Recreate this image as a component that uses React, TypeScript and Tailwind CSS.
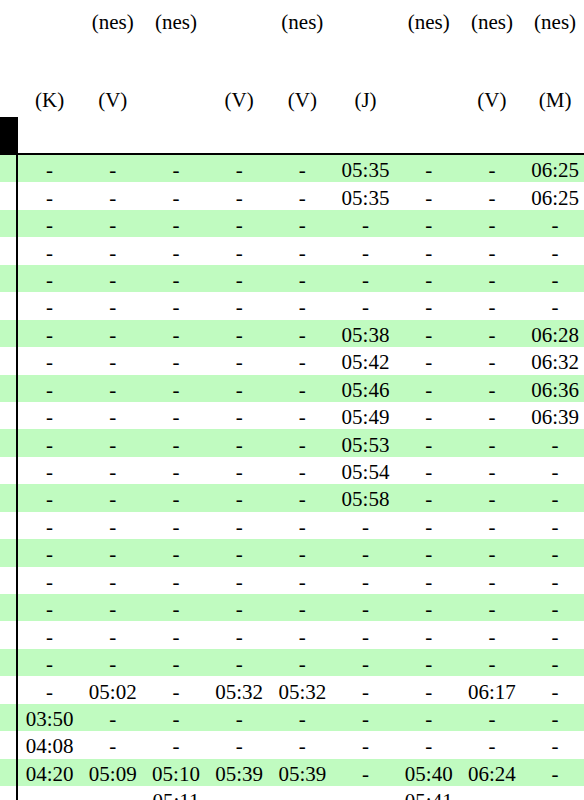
import React from "react";

const D = "-";
const blank = (): string[] => Array(9).fill(D);

function row(vals: Record<number, string>, base: string[] = blank()): string[] {
  const r = [...base];
  Object.entries(vals).forEach(([k, v]) => {
    r[Number(k)] = v;
  });
  return r;
}

const rows: string[][] = [
  row({ 5: "05:35", 8: "06:25" }),
  row({ 5: "05:35", 8: "06:25" }),
  blank(),
  blank(),
  blank(),
  blank(),
  row({ 5: "05:38", 8: "06:28" }),
  row({ 5: "05:42", 8: "06:32" }),
  row({ 5: "05:46", 8: "06:36" }),
  row({ 5: "05:49", 8: "06:39" }),
  row({ 5: "05:53" }),
  row({ 5: "05:54" }),
  row({ 5: "05:58" }),
  blank(),
  blank(),
  blank(),
  blank(),
  blank(),
  blank(),
  row({ 1: "05:02", 3: "05:32", 4: "05:32", 7: "06:17" }),
  row({ 0: "03:50" }),
  row({ 0: "04:08" }),
  row({ 0: "04:20", 1: "05:09", 2: "05:10", 3: "05:39", 4: "05:39", 6: "05:40", 7: "06:24" }),
  row({ 2: "05:11", 6: "05:41" }, Array(9).fill("")),
];

const headA = ["", "(nes)", "(nes)", "", "(nes)", "", "(nes)", "(nes)", "(nes)"];
const headB = ["(K)", "(V)", "", "(V)", "(V)", "(J)", "", "(V)", "(M)"];

function HeadRow({ items }: { items: string[] }) {
  return (
    <div className="flex h-[28px] items-center">
      <div className="w-[18px] shrink-0" />
      {items.map((t, i) => (
        <div key={i} className="w-[63.2px] shrink-0 text-center">
          {t}
        </div>
      ))}
    </div>
  );
}

export default function App() {
  return (
    <div
      className="w-[584px] h-[800px] overflow-hidden bg-white text-black text-[21px] leading-none"
      style={{ fontFamily: '"Liberation Serif", "Times New Roman", serif' }}
    >
      <div className="flex flex-col">
        <div className="h-[8px]" />
        <HeadRow items={headA} />
        <div className="h-[50px]" />
        <HeadRow items={headB} />
        <div className="h-[3px]" />
        <div className="flex h-[38px] border-b-2 border-black">
          <div className="w-[18px] shrink-0 bg-black" />
        </div>
        {rows.map((r, i) => (
          <div
            key={i}
            className={`flex h-[27.45px] shrink-0 items-center ${i % 2 === 0 ? "bg-[#c0fbc0]" : "bg-white"}`}
          >
            <div className="w-[18px] h-full shrink-0 border-r-2 border-black" />
            {r.map((v, j) => (
              <div key={j} className="w-[63.2px] shrink-0 pt-[4px] text-center whitespace-nowrap">
                {v}
              </div>
            ))}
          </div>
        ))}
      </div>
    </div>
  );
}
